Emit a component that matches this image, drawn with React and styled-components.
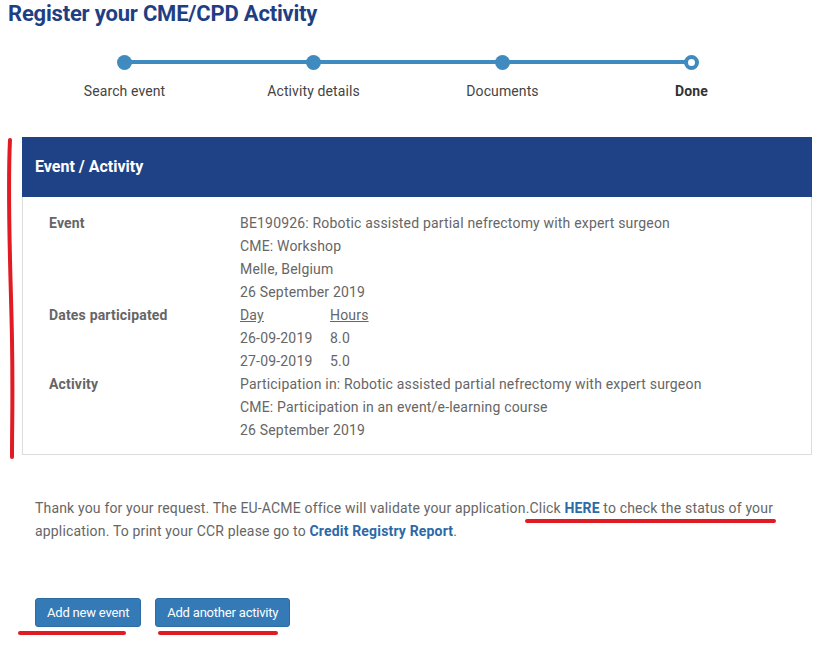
import React from 'react'
import styled, { createGlobalStyle } from 'styled-components'

const GlobalStyle = createGlobalStyle`
	body {
		margin: 0;
		background: #fff;
		font-family: Roboto, "Liberation Sans", sans-serif;
	}
`

const steps = [
	{ label: 'Search event' },
	{ label: 'Activity details' },
	{ label: 'Documents' },
	{ label: 'Done', current: true },
]

const App = () => {
	return (
		<Page>
			<GlobalStyle />
			<Title>Register your CME/CPD Activity</Title>
			<Stepper>
				{steps.map((s) => (
					<Step key={s.label}>
						<Dot current={s.current} />
						<StepLabel current={s.current}>{s.label}</StepLabel>
					</Step>
				))}
			</Stepper>

			<Content>
				<Panel>
					<PanelHeader>Event / Activity</PanelHeader>
					<PanelBody>
						<Label>Event</Label>
						<Value>
							<div>BE190926: Robotic assisted partial nefrectomy with expert surgeon</div>
							<div>CME: Workshop</div>
							<div>Melle, Belgium</div>
							<div>26 September 2019</div>
						</Value>
						<Label>Dates participated</Label>
						<Value>
							<DateRow>
								<Head>Day</Head>
								<Head>Hours</Head>
							</DateRow>
							<DateRow>
								<span>26-09-2019</span>
								<span>8.0</span>
							</DateRow>
							<DateRow>
								<span>27-09-2019</span>
								<span>5.0</span>
							</DateRow>
						</Value>
						<Label>Activity</Label>
						<Value>
							<div>Participation in: Robotic assisted partial nefrectomy with expert surgeon</div>
							<div>CME: Participation in an event/e-learning course</div>
							<div>26 September 2019</div>
						</Value>
					</PanelBody>
				</Panel>

				<Notice>
					Thank you for your request. The EU-ACME office will validate your application.Click{' '}
					<Link href="#">HERE</Link> to check the status of your application. To print your CCR please go to{' '}
					<Link href="#">Credit Registry Report</Link>.
				</Notice>

				<Buttons>
					<Button>Add new event</Button>
					<Button>Add another activity</Button>
				</Buttons>
			</Content>

			<Marks viewBox="0 0 823 669" width="823" height="669">
				<path d="M10 140 C 7 200, 11 280, 12 340 S 12 420, 12 457" />
				<path d="M527 521 L 774 521" />
				<path d="M20 633 L 124 633" />
				<path d="M160 633 L 276 633" />
			</Marks>
		</Page>
	)
}

const Page = styled.div`
	position: relative;
	width: 823px;
	min-height: 669px;
	padding: 0 8px;
	box-sizing: border-box;
`
const Title = styled.h1`
	margin: 0;
	font-size: 22px;
	line-height: 28px;
	font-weight: 700;
	color: #1f3f85;
	letter-spacing: -0.2px;
`
const Stepper = styled.div`
	position: relative;
	display: grid;
	grid-template-columns: repeat(4, 189px);
	width: 756px;
	margin: 27px 0 0 22px;

	&::before {
		content: '';
		position: absolute;
		top: 5px;
		left: 94px;
		right: 94px;
		height: 4px;
		background: #3f8bbf;
	}
`
const Step = styled.div`
	display: flex;
	flex-direction: column;
	align-items: center;
	position: relative;
`
const Dot = styled.span`
	width: 15px;
	height: 15px;
	border-radius: 50%;
	box-sizing: border-box;
	background: ${({ current }) => (current ? '#fff' : '#3f8bbf')};
	border: ${({ current }) => (current ? '4px solid #3f8bbf' : 'none')};
`
const StepLabel = styled.span`
	margin-top: 13px;
	font-size: 14px;
	line-height: 17px;
	letter-spacing: 0.1px;
	color: ${({ current }) => (current ? '#333' : '#444')};
	font-weight: ${({ current }) => (current ? 700 : 400)};
`
const Content = styled.div`
	margin: 37px 3px 0 14px;
`
const Panel = styled.div`
	border: 1px solid #ddd;
`
const PanelHeader = styled.div`
	background: #1f4287;
	color: #fff;
	font-size: 16px;
	font-weight: 700;
	height: 60px;
	display: flex;
	align-items: center;
	padding: 0 0 1px 13px;
	box-sizing: border-box;
	margin: -1px -1px 0;
`
const PanelBody = styled.div`
	display: grid;
	grid-template-columns: 191px 1fr;
	padding: 15px 26px 12px;
	font-size: 14px;
	line-height: 23px;
	letter-spacing: 0.18px;
	color: #666;
`
const Label = styled.div`
	font-weight: 700;
`
const Value = styled.div``
const DateRow = styled.div`
	display: grid;
	grid-template-columns: 90px auto;
`
const Head = styled.span`
	text-decoration: underline;
	justify-self: start;
`
const Notice = styled.p`
	margin: 42px 0 0;
	padding: 0 28px 0 13px;
	font-size: 14px;
	line-height: 23px;
	letter-spacing: 0.17px;
	color: #666;
`
const Link = styled.a`
	color: #2a6aa8;
	font-weight: 700;
	text-decoration: none;
`
const Buttons = styled.div`
	display: flex;
	gap: 14px;
	margin-top: 55px;
	padding-left: 13px;
`
const Button = styled.button`
	height: 29px;
	padding: 0 11px;
	border: 1px solid #2e6da4;
	border-radius: 3px;
	background: #337ab7;
	color: #fff;
	font-family: Roboto, "Liberation Sans", sans-serif;
	font-size: 13px;
	letter-spacing: -0.2px;
	cursor: pointer;
`
const Marks = styled.svg`
	position: absolute;
	top: 0;
	left: 0;
	pointer-events: none;

	path {
		fill: none;
		stroke: #e01b24;
		stroke-width: 4;
		stroke-linecap: round;
	}
`

export default App
